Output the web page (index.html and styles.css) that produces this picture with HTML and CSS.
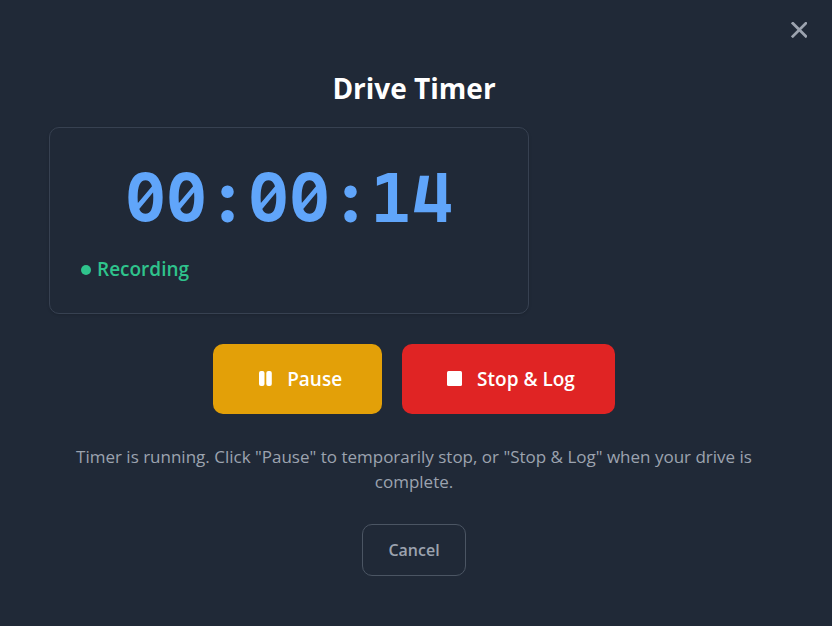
FILE: index.html
```html
<!DOCTYPE html>
<html lang="en">
<head>
<meta charset="utf-8">
<meta name="viewport" content="width=device-width, initial-scale=1">
<title>Drive Timer</title>
<link rel="stylesheet" href="styles.css">
</head>
<body>
<main class="dialog">
  <button class="close" type="button" aria-label="Close">
    <svg width="16" height="16" viewBox="0 0 16 16" aria-hidden="true"><path d="M1.8 1.3l13 13M14.8 1.3l-13 13" fill="none" stroke="currentColor" stroke-width="2.7" stroke-linecap="square"/></svg>
  </button>
  <h1 class="title">Drive Timer</h1>
  <section class="card">
    <div class="time" role="timer">00:00:14</div>
    <p class="status"><span class="dot"></span>Recording</p>
  </section>
  <div class="actions">
    <button class="action pause" type="button">
      <svg width="15" height="16" viewBox="0 0 15 16" aria-hidden="true"><rect x="1" y="0" width="5.5" height="15" rx="2" fill="currentColor"/><rect x="8.3" y="0" width="5.5" height="15" rx="2" fill="currentColor"/></svg>
      Pause
    </button>
    <button class="action stop" type="button">
      <svg width="16" height="16" viewBox="0 0 16 16" aria-hidden="true"><rect x="0" y="0" width="15" height="15" rx="1.5" fill="currentColor"/></svg>
      Stop &amp; Log
    </button>
  </div>
  <p class="hint">Timer is running. Click "Pause" to temporarily stop, or "Stop &amp; Log" when your drive is complete.</p>
  <button class="cancel" type="button">Cancel</button>
</main>
</body>
</html>
```
FILE: styles.css
```css
* {
  box-sizing: border-box;
}

body {
  margin: 0;
  min-height: 100vh;
  background: #202937;
  color: #ffffff;
  font-family: "Segoe UI", "Open Sans", "Noto Sans", sans-serif;
}

button {
  font-family: inherit;
  cursor: pointer;
}

.dialog {
  position: relative;
  display: flex;
  flex-direction: column;
  align-items: center;
  padding: 68px 53px 50px 49px;
}

.close {
  position: absolute;
  top: 14px;
  right: 17px;
  display: flex;
  padding: 8px;
  border: 0;
  background: none;
  color: #9ca3af;
}

.title {
  margin: 0 0 19px;
  font-size: 28px;
  line-height: 40px;
  font-weight: 700;
}

.card {
  align-self: flex-start;
  width: 100%;
  max-width: 480px;
  padding: 30px 31px 28px;
  border: 1px solid #374151;
  border-radius: 10px;
  box-shadow: 0 1px 3px rgba(0, 0, 0, 0.15);
}

.time {
  margin-bottom: 16px;
  color: #60a5fa;
  font-family: "Cascadia Mono", "DejaVu Sans Mono", monospace;
  font-size: 70px;
  line-height: 80px;
  font-weight: 700;
  font-variant-numeric: slashed-zero;
  text-align: center;
}

.status {
  display: flex;
  align-items: center;
  gap: 6px;
  margin: 0;
  color: #2fc38c;
  font-size: 19px;
  line-height: 31px;
  font-weight: 600;
}

.dot {
  width: 10px;
  height: 10px;
  border-radius: 50%;
  background: currentColor;
}

.actions {
  display: flex;
  flex-wrap: wrap;
  justify-content: center;
  gap: 20px;
  margin: 30px 0;
}

.action {
  display: flex;
  align-items: center;
  justify-content: center;
  gap: 14px;
  min-height: 70px;
  padding: 0 40px 0 45px;
  border: 0;
  border-radius: 10px;
  color: #ffffff;
  font-size: 19px;
  line-height: 28px;
  font-weight: 600;
}

.pause {
  background: #e3a008;
}

.stop {
  background: #e02424;
}

.hint {
  margin: 0 0 30px;
  padding: 0 20px;
  color: #9ca3af;
  font-size: 17px;
  line-height: 25px;
  text-align: center;
}

.cancel {
  padding: 12px 25px;
  border: 1px solid #4b5563;
  border-radius: 10px;
  background: none;
  color: #9ca3af;
  font-size: 16px;
  line-height: 26px;
  font-weight: 600;
}
```
